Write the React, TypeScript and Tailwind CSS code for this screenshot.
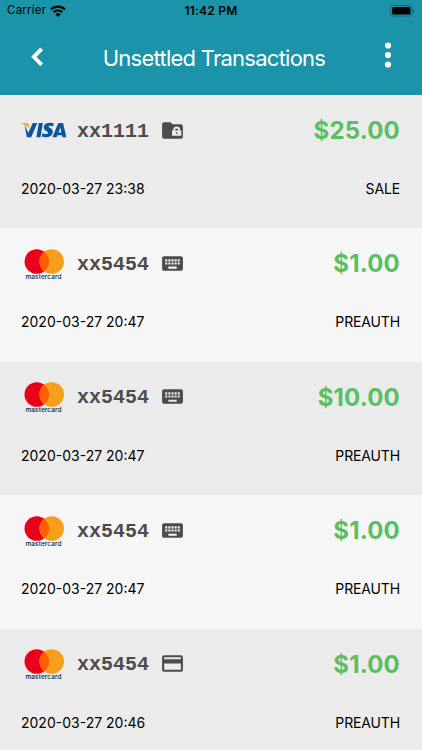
import React from 'react';
import { MdCreditCard, MdKeyboard } from 'react-icons/md';

const transactions = [
  { brand: 'visa', card: 'xx1111', entry: 'vault', amount: '$25.00', date: '2020-03-27 23:38', type: 'SALE' },
  { brand: 'mastercard', card: 'xx5454', entry: 'keyed', amount: '$1.00', date: '2020-03-27 20:47', type: 'PREAUTH' },
  { brand: 'mastercard', card: 'xx5454', entry: 'keyed', amount: '$10.00', date: '2020-03-27 20:47', type: 'PREAUTH' },
  { brand: 'mastercard', card: 'xx5454', entry: 'keyed', amount: '$1.00', date: '2020-03-27 20:47', type: 'PREAUTH' },
  { brand: 'mastercard', card: 'xx5454', entry: 'card', amount: '$1.00', date: '2020-03-27 20:46', type: 'PREAUTH' },
];

function VisaLogo() {
  return (
    <svg viewBox="0 0 46 16" className="w-[46px] h-4">
      <path fill="#0b55a0" d="M3.500 2.500 7.200 11 11.800 1h4.500L10.200 15.200H5.900Z" />
      <path fill="#0b55a0" d="M17.800 1h4.100l-2.400 14.200h-4.100Z" />
      <path fill="#0b55a0" d="M32.700 1.300 32.100 4.400c-1.600-.8-4.500-1-4.600.2 0 1.300 4.400 1.700 4.300 5.400-.1 5-6.700 6.200-11 4.500l.6-3.300c2 1.100 5.700 1.300 5.700-.5 0-1.400-4.300-1.700-4.300-5.200C22.800 1 28.800 0 32.700 1.300Z" />
      <path fill="#0b55a0" fillRule="evenodd" d="M38.600 1h3.500l3.200 14.200h-3.900l-.4-1.900h-4.600l-.8 1.900h-4.100L36.700 2.300C37 1.400 37.700 1 38.600 1Zm.8 4.400-2 5h2.900Z" />
      <path fill="#f7a823" d="M0 1h6c1 0 1.500.4 1.700 1.300l1 4.600C7.100 4.600 4.300 2.400 0 1.500Z" />
    </svg>
  );
}

function MastercardLogo() {
  return (
    <div className="ml-[2px] mt-[3px] w-[41px] flex flex-col items-center">
      <svg viewBox="0 0 40 25" className="w-10 h-[25px]">
        <circle cx="12.800" cy="12.500" r="12.300" fill="#eb001b" />
        <circle cx="27.700" cy="12.500" r="12.300" fill="#f79e1b" />
        <path fill="#ff5f00" d="M20.250 2.710a12.300 12.300 0 0 1 0 19.580 12.300 12.300 0 0 1 0-19.580Z" />
      </svg>
      <span className="text-[6.500px] leading-[7px] font-medium tracking-[0.015em] text-[#222]">mastercard</span>
    </div>
  );
}

function EntryIcon({ entry }: { entry: string }) {
  if (entry === 'keyed') return <MdKeyboard className="w-[25px] h-[25px]" />;
  if (entry === 'card') return <MdCreditCard className="w-[25px] h-[25px]" />;
  return (
    <svg viewBox="0 0 24 24" className="w-[25px] h-[25px]" fill="currentColor">
      <path
        fillRule="evenodd"
        d="M4 4h6l2 2h8a2 2 0 0 1 2 2v10a2 2 0 0 1-2 2H4a2 2 0 0 1-2-2V6a2 2 0 0 1 2-2Zm7.500 13h9v-5h-1.200v-.5a3.300 3.300 0 0 0-6.600 0v.5h-1.200Zm3-5v-.5a1.500 1.500 0 0 1 3 0v.5Zm1.500 1.700a.8.8 0 1 1 0 1.600.8.8 0 0 1 0-1.600Z"
      />
    </svg>
  );
}

function StatusBar() {
  return (
    <div className="h-[22px] px-[7px] grid grid-cols-3 items-center text-[12px] text-black">
      <div className="flex items-center">
        <span className="text-[11.500px] tracking-[0.02em]">Carrier</span>
        <svg viewBox="0 0 16 12" className="w-4 h-3 ml-1 -mt-px" fill="none" stroke="currentColor" strokeWidth="2.200">
          <path d="M1 4.500a10 10 0 0 1 14 0M3.600 7.300a6.300 6.300 0 0 1 8.800 0" />
          <path fill="currentColor" stroke="none" d="m8 12-2.700-2.800a4 4 0 0 1 5.400 0Z" />
        </svg>
      </div>
      <span className="text-center font-semibold tracking-[0.02em]">11:42 PM</span>
      <svg viewBox="0 0 25 12" className="w-[25px] h-3 -mt-px justify-self-end">
        <rect x=".5" y=".5" width="21.500" height="10.500" rx="2.800" fill="none" stroke="#12697a" />
        <rect x="2" y="2" width="18.500" height="7.500" rx="1.500" />
        <path d="M23.200 4v4c1.500-.5 1.500-3.500 0-4Z" fill="#12697a" />
      </svg>
    </div>
  );
}

function App() {
  return (
    <div className="w-full h-[750px] overflow-hidden bg-[#ebebeb] font-['Inter',sans-serif]">
      <header className="h-[95px] bg-[#1b93a9]">
        <StatusBar />
        <div className="h-[73px] px-[30px] flex items-center justify-between text-white">
          <svg viewBox="0 0 14 20" className="w-3.5 h-5 -mt-1" fill="none" stroke="currentColor" strokeWidth="3.800">
            <path d="m11.700 1.800-7.900 8 7.900 8" />
          </svg>
          <h1 className="text-[22px] font-normal tracking-[-0.034em]">Unsettled Transactions</h1>
          <svg viewBox="0 0 8 26" className="w-2 h-[26px] -mt-[7px]" fill="currentColor">
            <circle cx="4" cy="3.500" r="3.100" />
            <circle cx="4" cy="13" r="3.100" />
            <circle cx="4" cy="22.500" r="3.100" />
          </svg>
        </div>
      </header>

      <main>
        {transactions.map((item, index) => (
          <div key={index} className="h-[133.4px] pl-[21px] pr-[22px] pt-[15px] odd:bg-[#ebebeb] even:bg-[#f6f6f6]">
            <div className="h-10 flex items-center">
              <div className="w-14 flex items-center">
                {item.brand === 'visa' ? <VisaLogo /> : <MastercardLogo />}
              </div>
              <span className="w-[83px] pt-[3px] font-['Liberation_Mono',monospace] text-[20px] font-bold text-[#4c4c4c]">
                {item.card}
              </span>
              <span className="text-[#4c4c4c]">
                <EntryIcon entry={item.entry} />
              </span>
              <span className="ml-auto pt-[2px] text-[24px] font-bold tracking-[0.008em] text-[#5abf62]">{item.amount}</span>
            </div>
            <div className="mt-[28px] flex items-center justify-between text-[14px] leading-[22px] text-black">
              <span>{item.date}</span>
              <span className="tracking-[-0.01em]">{item.type}</span>
            </div>
          </div>
        ))}
      </main>
    </div>
  );
}

export default App;
